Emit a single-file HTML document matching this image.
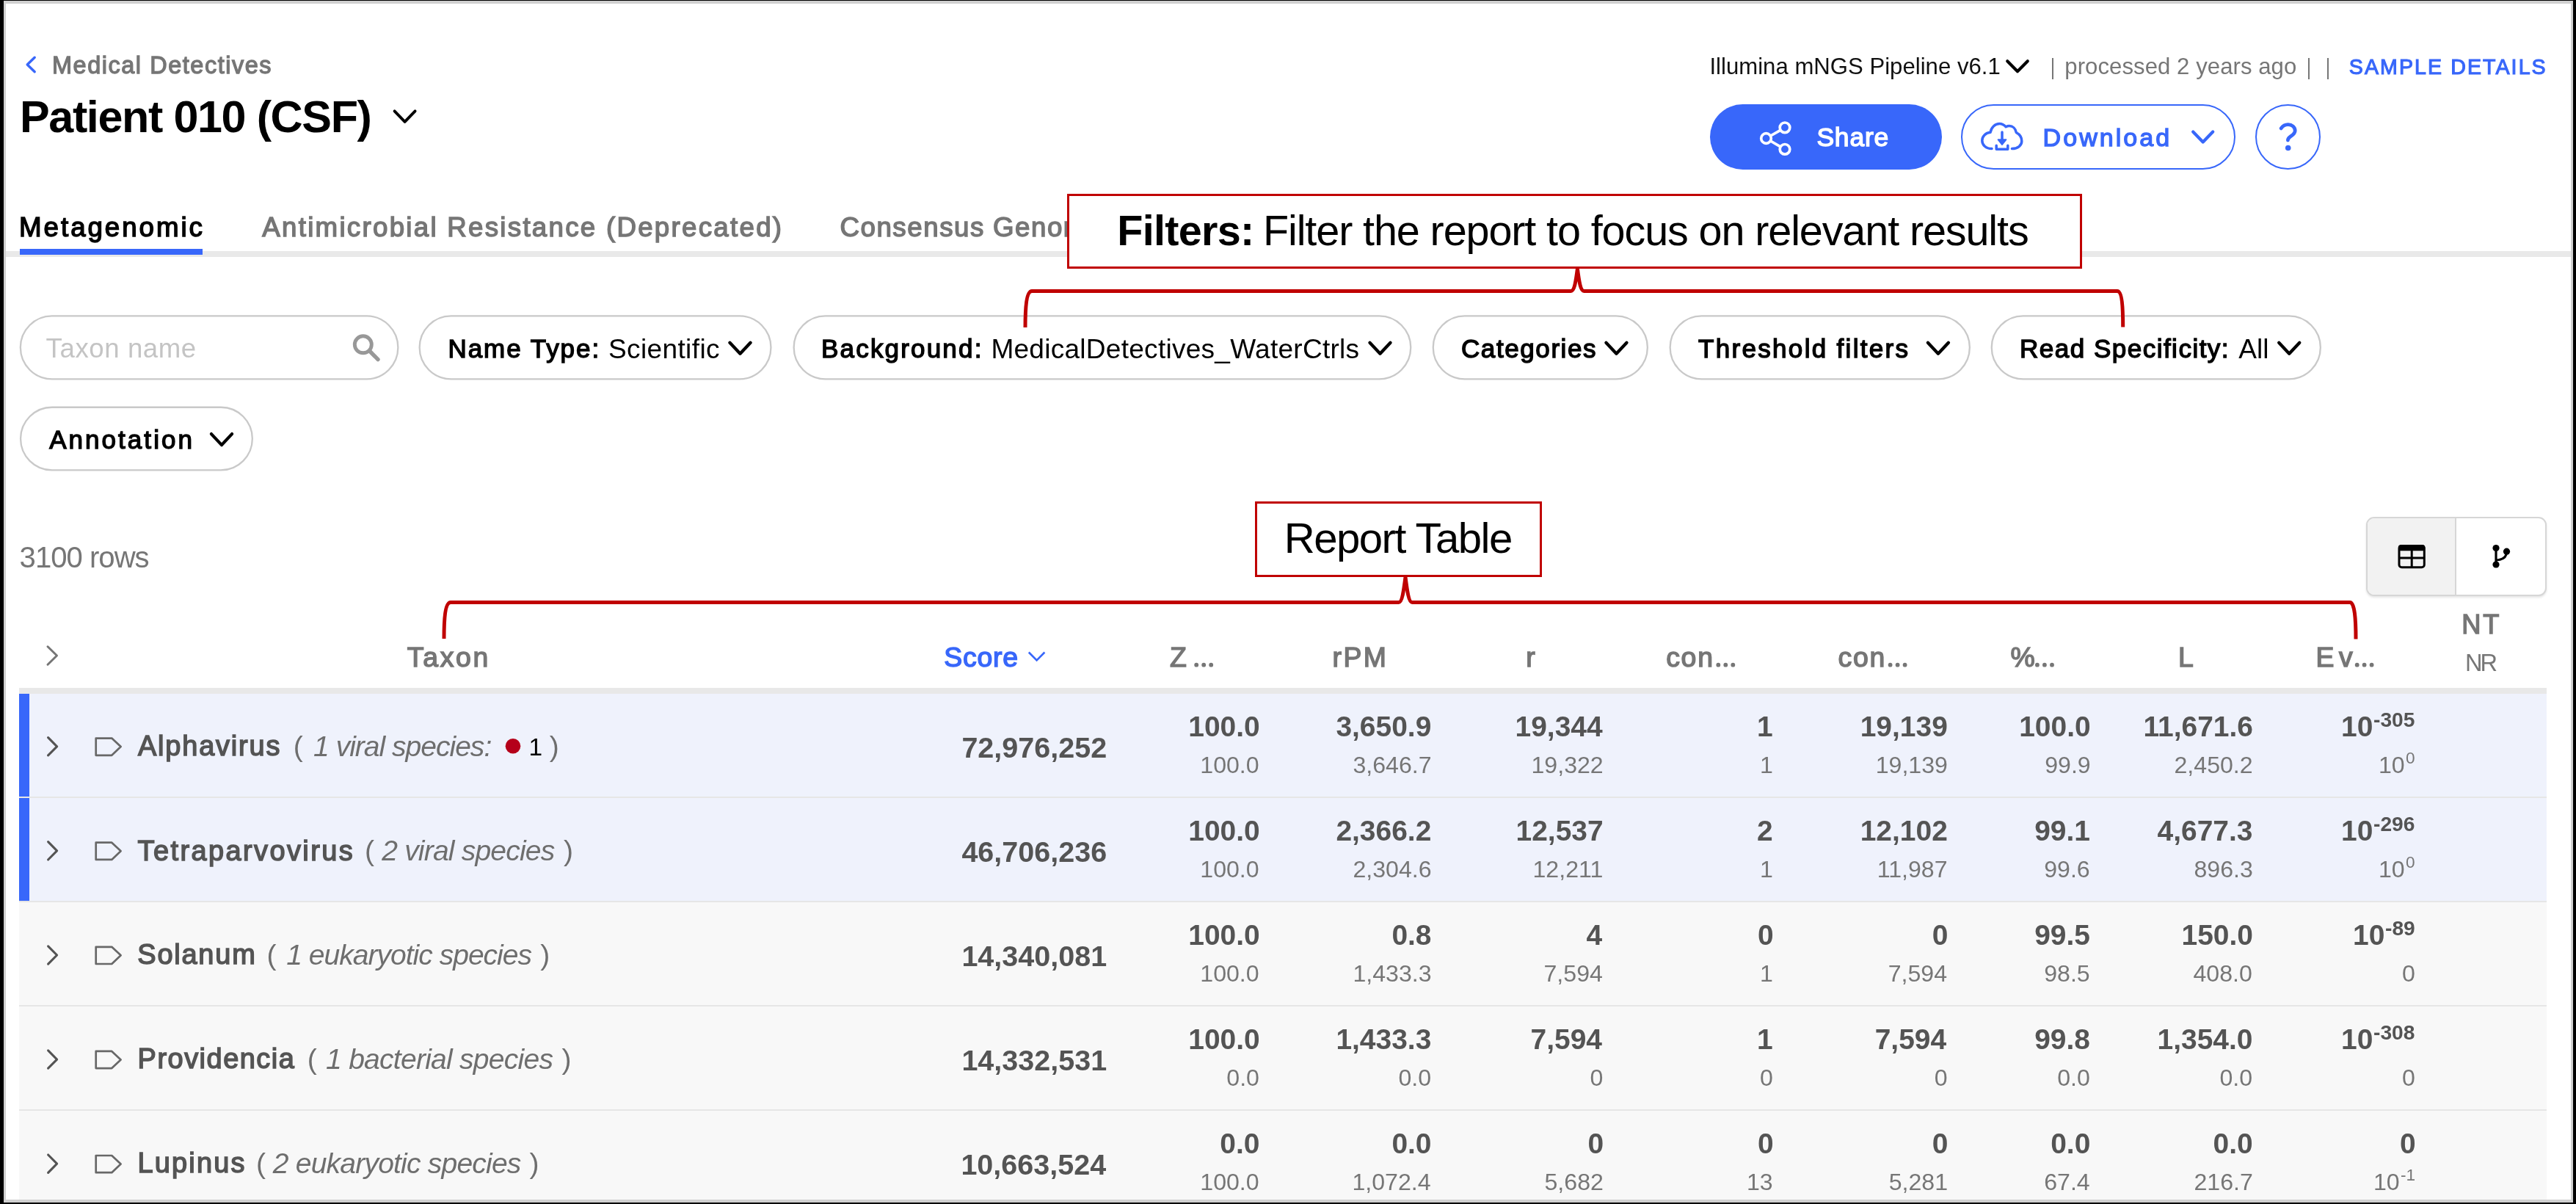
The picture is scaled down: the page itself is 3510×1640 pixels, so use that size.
<!DOCTYPE html>
<html><head><meta charset="utf-8"><title>Patient 010 (CSF)</title>
<style>
html,body{margin:0;padding:0;}
body{width:3510px;height:1640px;background:#000;position:relative;overflow:hidden;font-family:"Liberation Sans",sans-serif;}
.t{position:absolute;white-space:pre;line-height:0;font-family:"Liberation Sans",sans-serif;}
.r{position:absolute;box-sizing:border-box;}
svg.ov{position:absolute;left:0;top:0;z-index:10;}
#txt{position:absolute;left:0;top:0;width:3510px;height:1640px;z-index:5;will-change:transform;}
.clip{position:absolute;overflow:hidden;}
</style></head><body>
<div class="r" style="left:5px;top:1px;width:3501px;height:1637px;background:#d0d0d0;"></div>
<div class="r" style="left:8px;top:5px;width:3495px;height:1629px;background:#fff;"></div>
<!-- tabs line -->
<div class="r" style="left:8px;top:342px;width:3495px;height:8px;background:#e9e9e9;"></div>
<div class="r" style="left:27px;top:339px;width:249px;height:8px;background:#3867fa;"></div>
<!-- buttons -->
<div class="r" style="left:2330px;top:142px;width:316px;height:89px;border-radius:45px;background:#3867fa;"></div>
<div class="r" style="left:2672px;top:142px;width:374px;height:89px;border-radius:45px;border:2.5px solid #3867fa;"></div>
<div class="r" style="left:3073px;top:142px;width:89px;height:89px;border-radius:50%;border:2.5px solid #3867fa;"></div>
<!-- view toggle -->
<div class="r" style="left:3223.5px;top:703.5px;width:246px;height:108px;border-radius:11px;border:2px solid #d6d6d6;background:#fff;box-shadow:0 2px 3px rgba(0,0,0,0.10);overflow:hidden;">
  <div class="r" style="left:0;top:0;width:121px;height:104px;background:#f2f2f2;border-right:2px solid #d6d6d6;"></div>
</div>
<!-- table header border -->
<div class="r" style="left:26px;top:937px;width:3444px;height:8px;background:#e8e8e8;"></div>
<!-- rows -->
<div class="r" style="left:26px;top:945px;width:3444px;height:140px;background:#eff2fc;"></div>
<div class="r" style="left:26px;top:1085px;width:3444px;height:2px;background:#e6e6e6;"></div>
<div class="r" style="left:26px;top:1087px;width:3444px;height:140px;background:#eff2fc;"></div>
<div class="r" style="left:26px;top:1227px;width:3444px;height:2px;background:#e6e6e6;"></div>
<div class="r" style="left:26px;top:1229px;width:3444px;height:140px;background:#f8f8f8;"></div>
<div class="r" style="left:26px;top:1369px;width:3444px;height:2px;background:#e6e6e6;"></div>
<div class="r" style="left:26px;top:1371px;width:3444px;height:140px;background:#f8f8f8;"></div>
<div class="r" style="left:26px;top:1511px;width:3444px;height:2px;background:#e6e6e6;"></div>
<div class="r" style="left:26px;top:1513px;width:3444px;height:121px;background:#f8f8f8;"></div>
<div class="r" style="left:26px;top:945px;width:14px;height:140px;background:#3867fa;"></div>
<div class="r" style="left:26px;top:1087px;width:14px;height:140px;background:#3867fa;"></div>
<!-- pipes -->
<div class="r" style="left:2796px;top:79px;width:2px;height:29px;background:#767676;"></div>
<div class="r" style="left:3145px;top:79px;width:2px;height:29px;background:#767676;"></div>
<div class="r" style="left:3171px;top:79px;width:2px;height:29px;background:#767676;"></div>
<!-- annotation boxes -->
<div class="r" style="left:1454px;top:264px;width:1383px;height:102px;border:3px solid #c00000;background:#fff;z-index:4;"></div>
<div class="r" style="left:1710px;top:683px;width:391px;height:103px;border:3px solid #c00000;background:#fff;z-index:4;"></div>

<div id="txt">
<div class="t" style="left:71.00px;top:89.35px;font-size:32.42px;color:#767676;-webkit-text-stroke:1.30px #767676;letter-spacing:1.565px;">Medical Detectives</div>
<div class="t" style="left:27.00px;top:159.00px;font-size:61.05px;color:#000000;font-weight:700;letter-spacing:-1.387px;">Patient 010 (CSF)</div>
<div class="t" style="left:2329.40px;top:91.00px;font-size:31.10px;color:#111;letter-spacing:0.023px;">Illumina mNGS Pipeline v6.1</div>
<div class="t" style="left:2813.30px;top:91.00px;font-size:31.10px;color:#767676;letter-spacing:0.070px;">processed 2 years ago</div>
<div class="t" style="left:3200.80px;top:90.83px;font-size:28.57px;color:#3867fa;-webkit-text-stroke:1.14px #3867fa;letter-spacing:2.085px;">SAMPLE DETAILS</div>
<div class="t" style="left:2475.40px;top:187.29px;font-size:35.44px;color:#fff;-webkit-text-stroke:1.42px #fff;letter-spacing:0.850px;">Share</div>
<div class="t" style="left:2783.60px;top:186.92px;font-size:34.07px;color:#3867fa;-webkit-text-stroke:1.36px #3867fa;letter-spacing:3.014px;">Download</div>
<div class="t" style="left:26.10px;top:309.56px;font-size:36.68px;color:#000000;-webkit-text-stroke:1.47px #000000;letter-spacing:2.970px;">Metagenomic</div>
<div class="t" style="left:357.30px;top:309.56px;font-size:36.68px;color:#767676;-webkit-text-stroke:1.47px #767676;letter-spacing:2.278px;">Antimicrobial Resistance (Deprecated)</div>
<div class="t" style="left:1144.40px;top:309.56px;font-size:36.68px;color:#767676;-webkit-text-stroke:1.47px #767676;letter-spacing:1.562px;">Consensus</div>
<div class="clip" style="left:1300px;top:250px;width:154px;height:100px;"><div class="t" style="left:52.90px;top:59.56px;font-size:36.68px;color:#767676;-webkit-text-stroke:1.47px #767676;letter-spacing:1.562px;">Genome</div></div>
<div class="t" style="left:62.60px;top:475.00px;font-size:36.63px;color:#c4c4c4;letter-spacing:0.567px;">Taxon name</div>
<div class="t" style="left:610.40px;top:474.80px;font-size:35.03px;color:#000000;-webkit-text-stroke:1.40px #000000;letter-spacing:1.967px;">Name Type:</div>
<div class="t" style="left:828.90px;top:474.50px;font-size:37.06px;color:#000000;letter-spacing:0.378px;">Scientific</div>
<div class="t" style="left:1119.00px;top:474.80px;font-size:35.03px;color:#000000;-webkit-text-stroke:1.40px #000000;letter-spacing:2.180px;">Background:</div>
<div class="t" style="left:1350.40px;top:474.50px;font-size:37.06px;color:#000000;letter-spacing:0.256px;">MedicalDetectives_WaterCtrls</div>
<div class="t" style="left:1991.00px;top:474.80px;font-size:35.03px;color:#000000;-webkit-text-stroke:1.40px #000000;letter-spacing:1.578px;">Categories</div>
<div class="t" style="left:2314.00px;top:474.80px;font-size:35.03px;color:#000000;-webkit-text-stroke:1.40px #000000;letter-spacing:2.312px;">Threshold filters</div>
<div class="t" style="left:2752.00px;top:474.80px;font-size:35.03px;color:#000000;-webkit-text-stroke:1.40px #000000;letter-spacing:1.488px;">Read Specificity:</div>
<div class="t" style="left:3050.30px;top:474.50px;font-size:37.06px;color:#000000;letter-spacing:-0.050px;">All</div>
<div class="t" style="left:67.20px;top:598.90px;font-size:35.03px;color:#000000;-webkit-text-stroke:1.40px #000000;letter-spacing:3.033px;">Annotation</div>
<div class="t" style="left:26.60px;top:759.60px;font-size:40.12px;color:#767676;letter-spacing:-1.000px;">3100 rows</div>
<div class="t" style="left:554.80px;top:894.86px;font-size:37.36px;color:#767676;-webkit-text-stroke:1.49px #767676;letter-spacing:2.700px;">Taxon</div>
<div class="t" style="left:1286.20px;top:894.86px;font-size:37.36px;color:#3867fa;-webkit-text-stroke:1.49px #3867fa;letter-spacing:0.800px;">Score</div>
<div class="t" style="left:1593.90px;top:894.86px;font-size:37.36px;color:#767676;-webkit-text-stroke:1.49px #767676;">Z</div>
<div class="t" style="left:1815.50px;top:894.86px;font-size:37.36px;color:#767676;-webkit-text-stroke:1.49px #767676;letter-spacing:2.450px;">rPM</div>
<div class="t" style="left:2079.30px;top:894.86px;font-size:37.36px;color:#767676;-webkit-text-stroke:1.49px #767676;">r</div>
<div class="t" style="left:2270.20px;top:894.86px;font-size:37.36px;color:#767676;-webkit-text-stroke:1.49px #767676;letter-spacing:1.750px;">con</div>
<div class="t" style="left:2504.50px;top:894.86px;font-size:37.36px;color:#767676;-webkit-text-stroke:1.49px #767676;letter-spacing:1.750px;">con</div>
<div class="t" style="left:2739.60px;top:894.86px;font-size:37.36px;color:#767676;-webkit-text-stroke:1.49px #767676;">%</div>
<div class="t" style="left:2967.90px;top:894.86px;font-size:37.36px;color:#767676;-webkit-text-stroke:1.49px #767676;">L</div>
<div class="t" style="left:3155.50px;top:894.86px;font-size:37.36px;color:#767676;-webkit-text-stroke:1.49px #767676;">E</div>
<div class="t" style="left:3187.10px;top:894.86px;font-size:37.36px;color:#767676;-webkit-text-stroke:1.49px #767676;">v</div>
<div class="t" style="left:3354.30px;top:850.67px;font-size:36.26px;color:#767676;-webkit-text-stroke:1.45px #767676;letter-spacing:2.700px;">NT</div>
<div class="t" style="left:3359.00px;top:902.70px;font-size:32.56px;color:#767676;letter-spacing:-3.000px;">NR</div>
<div class="t" style="left:187.90px;top:1015.84px;font-size:37.91px;color:#545454;-webkit-text-stroke:1.52px #545454;letter-spacing:1.844px;">Alphavirus</div>
<div class="t" style="left:187.60px;top:1158.64px;font-size:37.91px;color:#545454;-webkit-text-stroke:1.52px #545454;letter-spacing:2.429px;">Tetraparvovirus</div>
<div class="t" style="left:187.30px;top:1300.34px;font-size:37.91px;color:#545454;-webkit-text-stroke:1.52px #545454;letter-spacing:1.800px;">Solanum</div>
<div class="t" style="left:187.60px;top:1442.34px;font-size:37.91px;color:#545454;-webkit-text-stroke:1.52px #545454;letter-spacing:1.520px;">Providencia</div>
<div class="t" style="left:187.60px;top:1584.34px;font-size:37.91px;color:#545454;-webkit-text-stroke:1.52px #545454;letter-spacing:2.167px;">Lupinus</div>
<div class="t" style="left:399.70px;top:1016.60px;font-size:39.10px;color:#6e6e6e;">(</div>
<div class="t" style="left:427.10px;top:1016.60px;font-size:39.10px;color:#6e6e6e;font-style:italic;letter-spacing:-1.020px;">1 viral species:</div>
<div class="t" style="left:748.70px;top:1016.60px;font-size:39.10px;color:#6e6e6e;">)</div>
<div class="t" style="left:497.00px;top:1159.40px;font-size:39.10px;color:#6e6e6e;">(</div>
<div class="t" style="left:520.20px;top:1159.40px;font-size:39.10px;color:#6e6e6e;font-style:italic;letter-spacing:-0.821px;">2 viral species</div>
<div class="t" style="left:767.90px;top:1159.40px;font-size:39.10px;color:#6e6e6e;">)</div>
<div class="t" style="left:363.60px;top:1301.10px;font-size:39.10px;color:#6e6e6e;">(</div>
<div class="t" style="left:390.30px;top:1301.10px;font-size:39.10px;color:#6e6e6e;font-style:italic;letter-spacing:-1.016px;">1 eukaryotic species</div>
<div class="t" style="left:736.20px;top:1301.10px;font-size:39.10px;color:#6e6e6e;">)</div>
<div class="t" style="left:418.70px;top:1443.10px;font-size:39.10px;color:#6e6e6e;">(</div>
<div class="t" style="left:444.10px;top:1443.10px;font-size:39.10px;color:#6e6e6e;font-style:italic;letter-spacing:-0.767px;">1 bacterial species</div>
<div class="t" style="left:765.50px;top:1443.10px;font-size:39.10px;color:#6e6e6e;">)</div>
<div class="t" style="left:349.00px;top:1585.10px;font-size:39.10px;color:#6e6e6e;">(</div>
<div class="t" style="left:371.80px;top:1585.10px;font-size:39.10px;color:#6e6e6e;font-style:italic;letter-spacing:-0.816px;">2 eukaryotic species</div>
<div class="t" style="left:721.50px;top:1585.10px;font-size:39.10px;color:#6e6e6e;">)</div>
<div class="t" style="left:720.40px;top:1018.40px;font-size:33.43px;color:#000000;">1</div>
<div class="t" style="left:1310.40px;top:1018.00px;font-size:39.53px;color:#545454;font-weight:700;">72,976,252</div>
<div class="t" style="left:1310.40px;top:1160.10px;font-size:39.53px;color:#545454;font-weight:700;">46,706,236</div>
<div class="t" style="left:1310.40px;top:1302.20px;font-size:39.53px;color:#545454;font-weight:700;">14,340,081</div>
<div class="t" style="left:1310.40px;top:1444.30px;font-size:39.53px;color:#545454;font-weight:700;">14,332,531</div>
<div class="t" style="left:1309.40px;top:1586.40px;font-size:39.53px;color:#545454;font-weight:700;">10,663,524</div>
<div class="t" style="left:1619.30px;top:990.00px;font-size:38.95px;color:#545454;font-weight:700;">100.0</div>
<div class="t" style="left:1635.30px;top:1041.90px;font-size:32.12px;color:#767676;">100.0</div>
<div class="t" style="left:1820.40px;top:990.00px;font-size:38.95px;color:#545454;font-weight:700;">3,650.9</div>
<div class="t" style="left:1843.40px;top:1041.90px;font-size:32.12px;color:#767676;">3,646.7</div>
<div class="t" style="left:2064.50px;top:990.00px;font-size:38.95px;color:#545454;font-weight:700;">19,344</div>
<div class="t" style="left:2086.50px;top:1041.90px;font-size:32.12px;color:#767676;">19,322</div>
<div class="t" style="left:2394.00px;top:990.00px;font-size:38.95px;color:#545454;font-weight:700;">1</div>
<div class="t" style="left:2398.00px;top:1041.90px;font-size:32.12px;color:#767676;">1</div>
<div class="t" style="left:2534.70px;top:990.00px;font-size:38.95px;color:#545454;font-weight:700;">19,139</div>
<div class="t" style="left:2555.70px;top:1041.90px;font-size:32.12px;color:#767676;">19,139</div>
<div class="t" style="left:2751.20px;top:990.00px;font-size:38.95px;color:#545454;font-weight:700;">100.0</div>
<div class="t" style="left:2786.20px;top:1041.90px;font-size:32.12px;color:#767676;">99.9</div>
<div class="t" style="left:2920.50px;top:990.00px;font-size:38.95px;color:#545454;font-weight:700;">11,671.6</div>
<div class="t" style="left:2962.50px;top:1041.90px;font-size:32.12px;color:#767676;">2,450.2</div>
<div class="t" style="left:3234.00px;top:979.50px;font-size:28.20px;color:#545454;font-weight:700;">-305</div>
<div class="t" style="left:3190.00px;top:990.00px;font-size:38.95px;color:#545454;font-weight:700;">10</div>
<div class="t" style="left:3278.00px;top:1032.00px;font-size:22.67px;color:#767676;">0</div>
<div class="t" style="left:3241.00px;top:1041.90px;font-size:32.12px;color:#767676;">10</div>
<div class="t" style="left:1619.30px;top:1132.10px;font-size:38.95px;color:#545454;font-weight:700;">100.0</div>
<div class="t" style="left:1635.30px;top:1184.00px;font-size:32.12px;color:#767676;">100.0</div>
<div class="t" style="left:1820.40px;top:1132.10px;font-size:38.95px;color:#545454;font-weight:700;">2,366.2</div>
<div class="t" style="left:1843.40px;top:1184.00px;font-size:32.12px;color:#767676;">2,304.6</div>
<div class="t" style="left:2065.50px;top:1132.10px;font-size:38.95px;color:#545454;font-weight:700;">12,537</div>
<div class="t" style="left:2088.50px;top:1184.00px;font-size:32.12px;color:#767676;">12,211</div>
<div class="t" style="left:2394.00px;top:1132.10px;font-size:38.95px;color:#545454;font-weight:700;">2</div>
<div class="t" style="left:2398.00px;top:1184.00px;font-size:32.12px;color:#767676;">1</div>
<div class="t" style="left:2534.70px;top:1132.10px;font-size:38.95px;color:#545454;font-weight:700;">12,102</div>
<div class="t" style="left:2557.70px;top:1184.00px;font-size:32.12px;color:#767676;">11,987</div>
<div class="t" style="left:2772.20px;top:1132.10px;font-size:38.95px;color:#545454;font-weight:700;">99.1</div>
<div class="t" style="left:2785.20px;top:1184.00px;font-size:32.12px;color:#767676;">99.6</div>
<div class="t" style="left:2939.50px;top:1132.10px;font-size:38.95px;color:#545454;font-weight:700;">4,677.3</div>
<div class="t" style="left:2989.50px;top:1184.00px;font-size:32.12px;color:#767676;">896.3</div>
<div class="t" style="left:3234.00px;top:1121.60px;font-size:28.20px;color:#545454;font-weight:700;">-296</div>
<div class="t" style="left:3190.00px;top:1132.10px;font-size:38.95px;color:#545454;font-weight:700;">10</div>
<div class="t" style="left:3278.00px;top:1174.10px;font-size:22.67px;color:#767676;">0</div>
<div class="t" style="left:3241.00px;top:1184.00px;font-size:32.12px;color:#767676;">10</div>
<div class="t" style="left:1619.30px;top:1274.20px;font-size:38.95px;color:#545454;font-weight:700;">100.0</div>
<div class="t" style="left:1635.30px;top:1326.10px;font-size:32.12px;color:#767676;">100.0</div>
<div class="t" style="left:1896.40px;top:1274.20px;font-size:38.95px;color:#545454;font-weight:700;">0.8</div>
<div class="t" style="left:1843.40px;top:1326.10px;font-size:32.12px;color:#767676;">1,433.3</div>
<div class="t" style="left:2161.50px;top:1274.20px;font-size:38.95px;color:#545454;font-weight:700;">4</div>
<div class="t" style="left:2103.50px;top:1326.10px;font-size:32.12px;color:#767676;">7,594</div>
<div class="t" style="left:2395.00px;top:1274.20px;font-size:38.95px;color:#545454;font-weight:700;">0</div>
<div class="t" style="left:2398.00px;top:1326.10px;font-size:32.12px;color:#767676;">1</div>
<div class="t" style="left:2632.70px;top:1274.20px;font-size:38.95px;color:#545454;font-weight:700;">0</div>
<div class="t" style="left:2572.70px;top:1326.10px;font-size:32.12px;color:#767676;">7,594</div>
<div class="t" style="left:2772.20px;top:1274.20px;font-size:38.95px;color:#545454;font-weight:700;">99.5</div>
<div class="t" style="left:2785.20px;top:1326.10px;font-size:32.12px;color:#767676;">98.5</div>
<div class="t" style="left:2972.50px;top:1274.20px;font-size:38.95px;color:#545454;font-weight:700;">150.0</div>
<div class="t" style="left:2988.50px;top:1326.10px;font-size:32.12px;color:#767676;">408.0</div>
<div class="t" style="left:3250.00px;top:1263.70px;font-size:28.20px;color:#545454;font-weight:700;">-89</div>
<div class="t" style="left:3206.00px;top:1274.20px;font-size:38.95px;color:#545454;font-weight:700;">10</div>
<div class="t" style="left:3273.00px;top:1326.10px;font-size:32.12px;color:#767676;">0</div>
<div class="t" style="left:1619.30px;top:1416.30px;font-size:38.95px;color:#545454;font-weight:700;">100.0</div>
<div class="t" style="left:1671.30px;top:1468.20px;font-size:32.12px;color:#767676;">0.0</div>
<div class="t" style="left:1820.40px;top:1416.30px;font-size:38.95px;color:#545454;font-weight:700;">1,433.3</div>
<div class="t" style="left:1905.40px;top:1468.20px;font-size:32.12px;color:#767676;">0.0</div>
<div class="t" style="left:2085.50px;top:1416.30px;font-size:38.95px;color:#545454;font-weight:700;">7,594</div>
<div class="t" style="left:2166.50px;top:1468.20px;font-size:32.12px;color:#767676;">0</div>
<div class="t" style="left:2394.00px;top:1416.30px;font-size:38.95px;color:#545454;font-weight:700;">1</div>
<div class="t" style="left:2398.00px;top:1468.20px;font-size:32.12px;color:#767676;">0</div>
<div class="t" style="left:2554.70px;top:1416.30px;font-size:38.95px;color:#545454;font-weight:700;">7,594</div>
<div class="t" style="left:2635.70px;top:1468.20px;font-size:32.12px;color:#767676;">0</div>
<div class="t" style="left:2772.20px;top:1416.30px;font-size:38.95px;color:#545454;font-weight:700;">99.8</div>
<div class="t" style="left:2803.20px;top:1468.20px;font-size:32.12px;color:#767676;">0.0</div>
<div class="t" style="left:2939.50px;top:1416.30px;font-size:38.95px;color:#545454;font-weight:700;">1,354.0</div>
<div class="t" style="left:3024.50px;top:1468.20px;font-size:32.12px;color:#767676;">0.0</div>
<div class="t" style="left:3234.00px;top:1405.80px;font-size:28.20px;color:#545454;font-weight:700;">-308</div>
<div class="t" style="left:3190.00px;top:1416.30px;font-size:38.95px;color:#545454;font-weight:700;">10</div>
<div class="t" style="left:3273.00px;top:1468.20px;font-size:32.12px;color:#767676;">0</div>
<div class="t" style="left:1662.30px;top:1558.40px;font-size:38.95px;color:#545454;font-weight:700;">0.0</div>
<div class="t" style="left:1635.30px;top:1610.30px;font-size:32.12px;color:#767676;">100.0</div>
<div class="t" style="left:1896.40px;top:1558.40px;font-size:38.95px;color:#545454;font-weight:700;">0.0</div>
<div class="t" style="left:1842.40px;top:1610.30px;font-size:32.12px;color:#767676;">1,072.4</div>
<div class="t" style="left:2163.50px;top:1558.40px;font-size:38.95px;color:#545454;font-weight:700;">0</div>
<div class="t" style="left:2104.50px;top:1610.30px;font-size:32.12px;color:#767676;">5,682</div>
<div class="t" style="left:2395.00px;top:1558.40px;font-size:38.95px;color:#545454;font-weight:700;">0</div>
<div class="t" style="left:2380.00px;top:1610.30px;font-size:32.12px;color:#767676;">13</div>
<div class="t" style="left:2632.70px;top:1558.40px;font-size:38.95px;color:#545454;font-weight:700;">0</div>
<div class="t" style="left:2573.70px;top:1610.30px;font-size:32.12px;color:#767676;">5,281</div>
<div class="t" style="left:2794.20px;top:1558.40px;font-size:38.95px;color:#545454;font-weight:700;">0.0</div>
<div class="t" style="left:2785.20px;top:1610.30px;font-size:32.12px;color:#767676;">67.4</div>
<div class="t" style="left:3015.50px;top:1558.40px;font-size:38.95px;color:#545454;font-weight:700;">0.0</div>
<div class="t" style="left:2989.50px;top:1610.30px;font-size:32.12px;color:#767676;">216.7</div>
<div class="t" style="left:3270.00px;top:1558.40px;font-size:38.95px;color:#545454;font-weight:700;">0</div>
<div class="t" style="left:3271.00px;top:1600.40px;font-size:22.67px;color:#767676;">-1</div>
<div class="t" style="left:3234.00px;top:1610.30px;font-size:32.12px;color:#767676;">10</div>
<div class="t" style="left:1522.30px;top:313.90px;font-size:57.56px;color:#000000;font-weight:700;letter-spacing:-0.700px;z-index:5;">Filters:</div>
<div class="t" style="left:1721.00px;top:313.90px;font-size:57.56px;color:#000000;letter-spacing:-1.116px;z-index:5;">Filter the report to focus on relevant results</div>
<div class="t" style="left:1749.80px;top:733.20px;font-size:58.14px;color:#000000;letter-spacing:-1.555px;z-index:5;">Report Table</div>
</div>
<svg class="ov" width="3510" height="1640" viewBox="0 0 3510 1640">
<g fill="none" stroke-linecap="butt" stroke-linejoin="miter">
  <!-- pills -->
  <g stroke="#c9c9c9" stroke-width="2.3" fill="none">
    <rect x="27.85" y="430.35" width="514.50" height="86.00" rx="43.00"/>
    <rect x="571.65" y="430.35" width="478.80" height="86.00" rx="43.00"/>
    <rect x="1081.65" y="430.35" width="840.60" height="86.00" rx="43.00"/>
    <rect x="1952.75" y="430.35" width="292.10" height="86.00" rx="43.00"/>
    <rect x="2275.65" y="430.35" width="408.20" height="86.00" rx="43.00"/>
    <rect x="2713.75" y="430.35" width="448.10" height="86.00" rx="43.00"/>
    <rect x="28.05" y="554.75" width="315.80" height="85.70" rx="42.85"/>
  </g>
  <!-- breadcrumb chevron -->
  <polyline points="47.2,78.2 37.2,88 47.2,97.8" stroke="#3867fa" stroke-width="3.4" stroke-linecap="round" stroke-linejoin="round"/>
  <!-- title chevron -->
  <polyline points="537.6,151.4 551.6,165.9 565.6,151.4" stroke="#000" stroke-width="3.9" stroke-linecap="round" stroke-linejoin="round"/>
  <!-- pipeline chevron -->
  <polyline points="2735.2,83.2 2749,97.3 2762.8,83.2" stroke="#000" stroke-width="4.1" stroke-linecap="round" stroke-linejoin="round"/>
  <!-- download chevron -->
  <polyline points="2988.2,179.6 3001.7,193.4 3015.2,179.6" stroke="#3867fa" stroke-width="4.3" stroke-linecap="round" stroke-linejoin="round"/>
  <!-- pill chevrons -->
  <g stroke="#000" stroke-width="4.3" stroke-linecap="round" stroke-linejoin="round">
    <polyline points="994.45,466.75 1008.50,481.75 1022.55,466.75"/>
    <polyline points="1866.45,466.75 1880.50,481.75 1894.55,466.75"/>
    <polyline points="2188.40,466.75 2202.45,481.75 2216.50,466.75"/>
    <polyline points="2626.85,466.75 2640.90,481.75 2654.95,466.75"/>
    <polyline points="3105.20,466.75 3119.25,481.75 3133.30,466.75"/>
    <polyline points="287.95,591.15 302.00,606.15 316.05,591.15"/>
  </g>
  <!-- search icon -->
  <circle cx="494.8" cy="469.3" r="11.5" stroke="#989898" stroke-width="4.9"/>
  <line x1="504.5" y1="479" x2="515" y2="489.6" stroke="#989898" stroke-width="5.4" stroke-linecap="round"/>
  <!-- share icon -->
  <g stroke="#fff" stroke-width="3.7">
    <circle cx="2432" cy="173.8" r="6.8"/>
    <circle cx="2406.5" cy="188.5" r="6.8"/>
    <circle cx="2432" cy="203.3" r="6.8"/>
    <line x1="2412.5" y1="185" x2="2426" y2="177.3"/>
    <line x1="2412.5" y1="192" x2="2426" y2="199.8"/>
  </g>
  <!-- cloud download icon -->
  <g stroke="#3867fa" stroke-width="3.5" stroke-linecap="round" stroke-linejoin="round">
    <path d="M2714,202.6 C2706,202.6 2700.8,197.5 2700.8,191.5 C2700.8,185.5 2705.5,181 2712,180.3 C2713.5,173 2718.5,168.6 2724.5,168.6 C2728.5,168.6 2731,170.5 2733.2,172.8 C2734.8,172 2736.2,171.6 2737.8,171.6 C2742.5,171.6 2746.3,175.2 2747.3,180.5 C2752,183 2754.8,187.5 2754.8,192.3 C2754.8,198 2749.5,202.6 2741.4,202.6"/>
    <line x1="2728" y1="180" x2="2728" y2="193"/>
    <polygon points="2722.6,190.2 2733.4,190.2 2728,197" fill="#3867fa" stroke-width="2"/>
    <polyline points="2720.2,198.2 2720.2,203.2 2735.8,203.2 2735.8,198.2"/>
  </g>
  <!-- header chevron -->
  <polyline points="65,880.8 77.5,893 65,905.2" stroke="#767676" stroke-width="3" stroke-linecap="round" stroke-linejoin="round"/>
  <!-- score chevron -->
  <polyline points="1401.8,888.5 1412.6,899.5 1423.4,888.5" stroke="#3867fa" stroke-width="2.6"/>
  <!-- row chevrons & tags -->
  <g id="rowicons">
    <polyline points="65.6,1004.6 77.6,1016.8 65.6,1028.9" stroke="#545454" stroke-width="3.1" stroke-linecap="round" stroke-linejoin="round"/>
    <path d="M130.7,1005.6 L152.3,1005.6 L164.6,1017.1 L152.3,1028.8 L130.7,1028.8 Z" stroke="#686868" stroke-width="2.7" stroke-linejoin="round"/>
  </g>
  <use href="#rowicons" y="142.1"/>
  <use href="#rowicons" y="284.2"/>
  <use href="#rowicons" y="426.3"/>
  <use href="#rowicons" y="568.4"/>
  <!-- red dot -->
  <circle cx="699" cy="1016.2" r="10.3" fill="#b5001a" stroke="none"/>
  <!-- table icon -->
  <g stroke="#000" stroke-width="3">
    <rect x="3269" y="743.4" width="34.3" height="29.4" rx="3.5"/>
    <rect x="3268" y="742.2" width="36.3" height="8" rx="3" fill="#000" stroke="none"/>
    <line x1="3269" y1="760.1" x2="3303.3" y2="760.1"/>
    <line x1="3286.2" y1="749" x2="3286.2" y2="772"/>
  </g>
  <!-- tree icon -->
  <g fill="#000" stroke="#000">
    <circle cx="3401" cy="746.5" r="4.6" stroke="none"/>
    <circle cx="3415.5" cy="751.2" r="4.6" stroke="none"/>
    <circle cx="3401" cy="769" r="4.6" stroke="none"/>
    <line x1="3401" y1="746.5" x2="3401" y2="769" stroke-width="3.2"/>
    <path d="M3415.5,751.2 C3415.5,758 3411,762.5 3401,763" fill="none" stroke-width="3.2"/>
  </g>
  <!-- help ? -->
  <path d="M3108.1,174.9 C3110.5,171.5 3114,169.7 3117.7,169.7 C3123,169.7 3127.2,173 3127.2,178.1 C3127.2,182 3124,183.8 3121.5,185.6 C3118.5,187.6 3117.4,189 3117.4,191.1" stroke="#3867fa" stroke-width="4.8" stroke-linecap="round"/>
  <circle cx="3117.7" cy="201.5" r="3.8" fill="#3867fa" stroke="none"/>
  <!-- header ellipsis dots -->
  <g fill="#767676" stroke="none">
    <circle cx="1630.2" cy="905.7" r="2.9"/><circle cx="1640.2" cy="905.7" r="2.9"/><circle cx="1650.2" cy="905.7" r="2.9"/>
    <circle cx="2341.3" cy="905.7" r="2.9"/><circle cx="2351.3" cy="905.7" r="2.9"/><circle cx="2361.3" cy="905.7" r="2.9"/>
    <circle cx="2575.6" cy="905.7" r="2.9"/><circle cx="2585.6" cy="905.7" r="2.9"/><circle cx="2595.6" cy="905.7" r="2.9"/>
    <circle cx="2775.9" cy="905.7" r="2.9"/><circle cx="2785.9" cy="905.7" r="2.9"/><circle cx="2796.0" cy="905.7" r="2.9"/>
    <circle cx="3211.7" cy="905.7" r="2.9"/><circle cx="3221.6" cy="905.7" r="2.9"/><circle cx="3231.6" cy="905.7" r="2.9"/>
  </g>
  <!-- braces -->
  <g stroke="#c00000" stroke-width="5" stroke-linejoin="round">
    <path d="M1397,446 C1397,420 1398.5,396.4 1406,396.4 L2140.5,396.4 C2145,396.4 2147,385 2149.4,366 C2151.8,385 2153.8,396.4 2158.3,396.4 L2885,396.4 C2891.5,396.4 2892.7,420 2892.7,445.5"/>
    <path d="M605,870 C605,844 606.5,820.4 614,820.4 L1906,820.4 C1910.5,820.4 1912.6,805 1915,786 C1917.4,805 1919.5,820.4 1924,820.4 L3202,820.4 C3208.5,820.4 3210,844 3210,870.4"/>
  </g>
</g>
</svg>

</body></html>
